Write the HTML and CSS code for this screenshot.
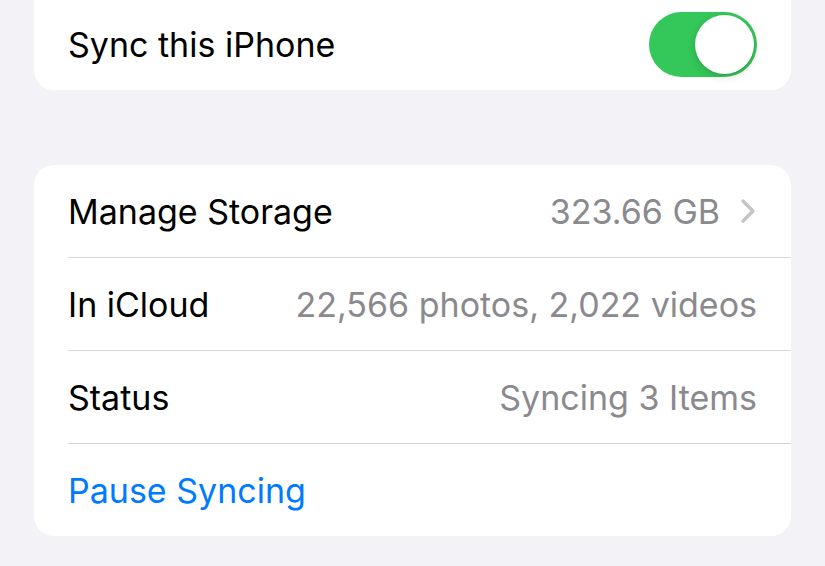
FILE: index.html
```html
<!DOCTYPE html>
<html lang="en">
<head>
    <meta charset="UTF-8">
    <meta name="viewport" content="width=device-width, initial-scale=1.0">
    <title>iCloud Photos</title>
    <link rel="stylesheet" href="styles.css">
</head>
<body>
    <div class="page">
        <div class="group group-top">
            <div class="row">
                <span class="label">Sync this iPhone</span>
                <div class="switch on">
                    <div class="knob"></div>
                </div>
            </div>
        </div>

        <div class="group">
            <div class="row">
                <span class="label">Manage Storage</span>
                <span class="value">323.66 GB</span>
                <svg class="chevron" width="16" height="26" viewBox="0 0 16 26">
                    <polyline points="3,3 13,13 3,23" fill="none" stroke="#c4c4c7" stroke-width="3.4" stroke-linecap="round" stroke-linejoin="round"/>
                </svg>
            </div>
            <div class="row">
                <span class="label">In iCloud</span>
                <span class="value">22,566 photos, 2,022 videos</span>
            </div>
            <div class="row">
                <span class="label">Status</span>
                <span class="value">Syncing 3 Items</span>
            </div>
            <div class="row">
                <span class="label link">Pause Syncing</span>
            </div>
        </div>
    </div>
</body>
</html>
```

FILE: styles.css
```css
body {
    margin: 0;
    background: #f2f2f7;
    font-family: Inter, "Noto Sans", sans-serif;
    color: #000;
}
.page {
    padding: 0 34px;
    margin-top: -2px;
}
.group {
    background: #fff;
    border-radius: 20px;
    overflow: hidden;
    margin-bottom: 75px;
}
.group:last-child {
    margin-bottom: 0;
}
.group-top {
    border-radius: 0 0 20px 20px;
}
.row {
    display: flex;
    align-items: center;
    height: 92px;
    margin-left: 34px;
    padding-right: 34px;
    font-size: 34px;
    letter-spacing: 0;
}
.row + .row {
    border-top: 1px solid #d6d6d8;
}
.label {
    flex: 1;
    white-space: nowrap;
}
.value {
    color: #8a8a8e;
    white-space: nowrap;
}
.link {
    color: #007aff;
}
.chevron {
    margin-left: 20px;
    margin-right: 1px;
}
.switch {
    width: 108px;
    height: 65px;
    border-radius: 33px;
    background: #e9e9eb;
    position: relative;
    margin-top: 1px;
}
.switch.on {
    background: #34c759;
}
.knob {
    position: absolute;
    top: 3px;
    left: 3px;
    width: 59px;
    height: 59px;
    border-radius: 50%;
    background: #fff;
    box-shadow: 0 3px 8px rgba(0, 0, 0, 0.15), 0 1px 1px rgba(0, 0, 0, 0.08);
}
.switch.on .knob {
    left: 46px;
}
```
